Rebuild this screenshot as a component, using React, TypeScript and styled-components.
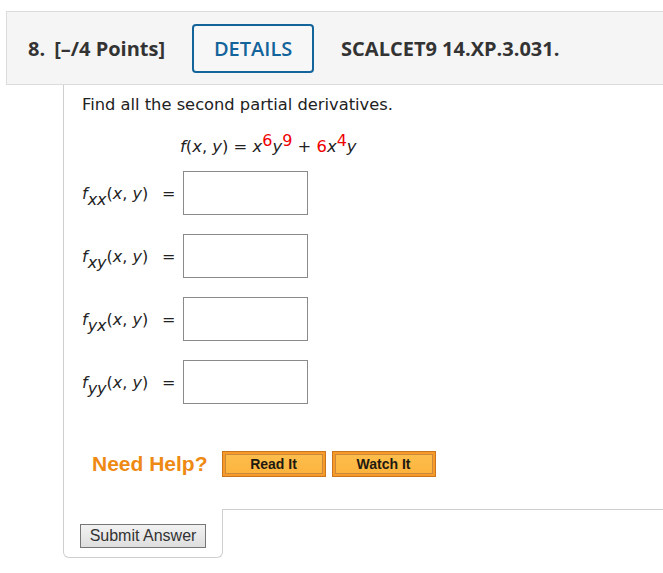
import React from 'react';
import styled, { createGlobalStyle } from 'styled-components';

const GlobalStyle = createGlobalStyle`
  html, body {
    margin: 0;
    padding: 0;
    background: #ffffff;
  }
  body {
    font-family: Verdana, 'DejaVu Sans', 'Bitstream Vera Sans', sans-serif;
    color: #222;
  }
`;

const Page = styled.div`
  width: 663px;
  height: 573px;
  overflow: hidden;
  padding-top: 11px;
  box-sizing: border-box;
`;

const Header = styled.header`
  margin-left: 6px;
  height: 74px;
  box-sizing: border-box;
  display: flex;
  align-items: center;
  padding-left: 21px;
  background: #f5f5f5;
  border: 1px solid #dcdcdc;
  border-right: none;
  font-family: 'Open Sans', 'Noto Sans', sans-serif;
  font-weight: 700;
  font-size: 20px;
  color: #333;
`;

const QNum = styled.span`
  margin-right: 9px;
`;

const Points = styled.span`
  margin-right: 27px;
`;

const DetailsButton = styled.button`
  width: 122px;
  height: 49px;
  box-sizing: border-box;
  border: 2px solid #13649a;
  border-radius: 4px;
  background: #f7f7f7;
  color: #13649a;
  font-family: 'Open Sans', 'Noto Sans', sans-serif;
  font-weight: 600;
  font-size: 20px;
  margin-right: 27px;
  padding: 0;
`;

const Code = styled.span``;

const Panel = styled.section`
  margin-left: 63px;
  border-left: 1px solid #cfcfcf;
  padding: 11px 0 31px 18px;
`;

const Prompt = styled.p`
  margin: 0;
  font-size: 16.3px;
  line-height: 18px;
`;

const Equation = styled.div`
  margin: 23px 0 0 98px;
  font-size: 16.4px;
  line-height: 20px;
`;

const V = styled.i`
  font-style: italic;
`;

const Red = styled.sup`
  color: #ee0000;
  font-size: 16px;
  vertical-align: 6px;
  line-height: 0;
`;

const RedNum = styled.span`
  color: #ee0000;
`;

const Rows = styled.div`
  margin-top: 14px;
  display: flex;
  flex-direction: column;
  gap: 19px;
`;

const Row = styled.div`
  display: flex;
  align-items: center;
  height: 44px;
`;

const Label = styled.span`
  width: 80px;
  font-size: 16px;
  white-space: nowrap;
`;

const Sub = styled.sub`
  font-style: italic;
  font-size: 16px;
  vertical-align: -6px;
  line-height: 0;
`;

const Eq = styled.span`
  width: 21px;
  font-size: 16px;
`;

const AnswerBox = styled.input`
  width: 125px;
  height: 44px;
  box-sizing: border-box;
  border: 1px solid #8a8a8a;
  background: #fff;
  padding: 0 4px;
`;

const HelpRow = styled.div`
  margin-top: 46px;
  padding-left: 10px;
  display: flex;
  align-items: center;
  gap: 6px;
  height: 28px;
`;

const HelpTitle = styled.span`
  font-family: 'Liberation Sans', Arial, sans-serif;
  font-weight: 700;
  font-size: 21px;
  color: #ee8a14;
  margin-right: 8px;
`;

const HelpButton = styled.button`
  width: 104px;
  height: 26px;
  box-sizing: border-box;
  border: 1px solid #c7761c;
  background: #f79a2a;
  padding: 2px;
  display: flex;
  cursor: pointer;
`;

const HelpInner = styled.span`
  flex: 1;
  border: 1px solid #c98a3c;
  background: linear-gradient(180deg, #fdbd4c 0%, #fdb43e 100%);
  font-family: 'Liberation Sans', Arial, sans-serif;
  font-weight: 700;
  font-size: 14px;
  line-height: 18px;
  color: #1e1a10;
  text-align: center;
`;

const Footer = styled.div`
  display: flex;
`;

const SubmitTab = styled.div`
  margin-left: 63px;
  width: 160px;
  box-sizing: border-box;
  height: 49px;
  border: 1px solid #cfcfcf;
  border-top: none;
  border-radius: 0 0 6px 6px;
  padding: 15px 0 0 16px;
`;

const FooterRest = styled.div`
  flex: 1;
  border-top: 1px solid #cfcfcf;
`;

const SubmitButton = styled.button`
  width: 126px;
  height: 24px;
  box-sizing: border-box;
  border: 1px solid #767676;
  background: linear-gradient(180deg, #f2f2f2 0%, #dedede 100%);
  font-family: 'Liberation Sans', Arial, sans-serif;
  font-size: 16px;
  color: #333;
  padding: 0;
`;

const fs = [
  ['x', 'x'],
  ['x', 'y'],
  ['y', 'x'],
  ['y', 'y'],
];

export default function App() {
  return (
    <Page>
      <GlobalStyle />
      <Header>
        <QNum>8.</QNum>
        <Points>[–/4 Points]</Points>
        <DetailsButton>DETAILS</DetailsButton>
        <Code>SCALCET9 14.XP.3.031.</Code>
      </Header>
      <Panel>
        <Prompt>Find all the second partial derivatives.</Prompt>
        <Equation>
          <V>f</V>(<V>x</V>, <V>y</V>) = <V>x</V>
          <Red>6</Red>
          <V>y</V>
          <Red>9</Red> + <RedNum>6</RedNum>
          <V>x</V>
          <Red>4</Red>
          <V>y</V>
        </Equation>
        <Rows>
          {fs.map(([a, b]) => (
            <Row key={a + b}>
              <Label>
                <V>f</V>
                <Sub>
                  {a}
                  {b}
                </Sub>
                (<V>x</V>, <V>y</V>)
              </Label>
              <Eq>=</Eq>
              <AnswerBox type="text" aria-label={`f${a}${b}`} />
            </Row>
          ))}
        </Rows>
        <HelpRow>
          <HelpTitle>Need Help?</HelpTitle>
          <HelpButton>
            <HelpInner>Read It</HelpInner>
          </HelpButton>
          <HelpButton>
            <HelpInner>Watch It</HelpInner>
          </HelpButton>
        </HelpRow>
      </Panel>
      <Footer>
        <SubmitTab>
          <SubmitButton>Submit Answer</SubmitButton>
        </SubmitTab>
        <FooterRest />
      </Footer>
    </Page>
  );
}
